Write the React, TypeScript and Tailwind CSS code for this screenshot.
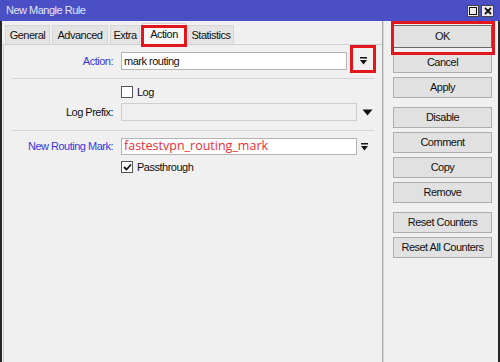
import React from "react";

const RedBox = ({ cls }: { cls: string }) => (
  <div className={`pointer-events-none absolute border-[3px] border-[#e3161e] ${cls}`} />
);

const BarArrow = () => (
  <svg width="9" height="8" viewBox="0 0 9 8">
    <rect x="1" y="0" width="7" height="1.5" fill="#111" />
    <path d="M1 3 H8 L4.5 7.5 Z" fill="#111" />
  </svg>
);

const Tri = () => (
  <svg width="11" height="7" viewBox="0 0 11 7">
    <path d="M0.5 0.5 H10.5 L5.5 6.5 Z" fill="#111" />
  </svg>
);

const Btn = ({ label, cls = "", dark = false }: { label: string; cls?: string; dark?: boolean }) => (
  <div
    className={`flex h-[21px] w-[99px] items-center justify-center border bg-[#e1e1e1] text-[#111] ${
      dark ? "border-[#6a6a6a]" : "border-[#adadad]"
    } ${cls}`}
  >
    {label}
  </div>
);

export default function App() {
  const tabs = ["General", "Advanced", "Extra", "Action", "Statistics"];
  return (
    <div className="flex h-[362px] w-[500px] flex-col overflow-hidden bg-[#f0f0f0] font-['Liberation_Sans',Arial,sans-serif] text-[11px] tracking-[-0.5px] text-[#111]">
      {/* Title bar */}
      <div className="flex h-[21px] shrink-0 items-center bg-[#4b4fc6] pl-[6px] pr-[6px]">
        <span className="text-[#e4e4f8]">New Mangle Rule</span>
        <div className="ml-auto flex gap-[2px]">
          <div className="flex h-[12px] w-[12px] items-center justify-center border border-[#444] bg-[#ececec]">
            <div className="h-[8px] w-[8px] border border-[#111]" />
          </div>
          <div className="flex h-[12px] w-[13px] items-center justify-center border border-[#444] bg-[#ececec]">
            <svg width="8" height="8" viewBox="0 0 8 8">
              <path d="M1 1 L7 7 M7 1 L1 7" stroke="#111" strokeWidth="1.8" />
            </svg>
          </div>
        </div>
      </div>

      {/* Body */}
      <div className="flex flex-1 border-x-2 border-[#262626]">
        {/* Left: tabs + panel */}
        <div className="flex w-[380px] flex-col">
          <div className="flex h-[23px] items-end gap-[2px] pl-[3px]">
            {tabs.map((t) =>
              t === "Action" ? (
                <div
                  key={t}
                  className="relative -mb-px flex h-[22px] w-[44px] items-center justify-center border border-b-0 border-[#d0d0d0] bg-[#f7f7f7]"
                >
                  {t}
                  <RedBox cls="left-[-2px] right-[-2px] top-[1px] bottom-[-2px]" />
                </div>
              ) : (
                <div
                  key={t}
                  className={`flex h-[19px] items-center justify-center border border-b-0 border-[#d6d6d6] bg-[#e4e4e4] ${
                    t === "General" ? "w-[45px]" : t === "Advanced" ? "w-[56px]" : t === "Extra" ? "w-[30px]" : "w-[46px]"
                  }`}
                >
                  {t}
                </div>
              )
            )}
          </div>

          <div className="ml-[1px] flex flex-1 flex-col border-l border-t border-[#d0d0d0] bg-[#f0f0f0]">
            {/* Action row */}
            <div className="mt-[7px] flex h-[18px] items-center">
              <div className="mr-[8px] w-[109px] text-right text-[#3737e0]">Action:</div>
              <div className="flex h-[18px] w-[226px] items-center border border-[#b4b4b4] bg-white pl-[2px]">mark routing</div>
              <div className="relative ml-[4px] flex h-[18px] w-[24px] items-center justify-center">
                <BarArrow />
                <RedBox cls="left-[-1px] right-[-1px] top-[-7px] bottom-[-3px]" />
              </div>
            </div>

            <div className="ml-[8px] mt-[8px] h-px w-[362px] bg-[#d4d4d4]" />

            {/* Log */}
            <div className="mt-[7px] flex h-[12px] items-center pl-[117px]">
              <div className="h-[12px] w-[12px] border border-[#555] bg-white" />
              <span className="ml-[4px]">Log</span>
            </div>

            {/* Log Prefix */}
            <div className="mt-[5px] flex h-[18px] items-center">
              <div className="mr-[8px] w-[109px] text-right">Log Prefix:</div>
              <div className="h-[18px] w-[236px] border border-[#cdcdcd] bg-[#efefef]" />
              <div className="flex h-[18px] w-[20px] items-center justify-center">
                <Tri />
              </div>
            </div>

            <div className="ml-[8px] mt-[9px] h-px w-[362px] bg-[#d4d4d4]" />

            {/* New Routing Mark */}
            <div className="mt-[7px] flex h-[17px] items-center">
              <div className="mr-[8px] w-[109px] text-right text-[#3737e0]">New Routing Mark:</div>
              <div className="flex h-[17px] w-[236px] items-center border border-[#b4b4b4] bg-white pl-[2px] font-['Open_Sans',Arial,sans-serif] text-[12.5px] tracking-normal text-[#ec2d35]">
                fastestvpn_routing_mark
              </div>
              <div className="flex h-[17px] w-[14px] items-center justify-center">
                <BarArrow />
              </div>
            </div>

            {/* Passthrough */}
            <div className="mt-[6px] flex h-[12px] items-center pl-[117px]">
              <div className="flex h-[12px] w-[12px] items-center justify-center border border-[#555] bg-white">
                <svg width="9" height="8" viewBox="0 0 9 8">
                  <path d="M1 4 L3.5 6.5 L8 1.5" stroke="#111" strokeWidth="1.8" fill="none" />
                </svg>
              </div>
              <span className="ml-[4px]">Passthrough</span>
            </div>
          </div>
        </div>

        {/* Separator */}
        <div className="w-[2px] border-l border-r border-l-[#a8a8a8] border-r-[#d8d8d8]" />

        {/* Right buttons */}
        <div className="flex flex-1 flex-col gap-[4px] pl-[9px] pt-[4px]">
          <div className="relative w-[99px]">
            <div className="flex h-[23px] w-[99px] items-center justify-center border border-[#6a6a6a] bg-[#e1e1e1]">OK</div>
            <RedBox cls="left-[-2px] right-[-3px] top-[-4px] bottom-[-7px]" />
          </div>
          <Btn label="Cancel" />
          <Btn label="Apply" />
          <Btn label="Disable" cls="mt-[5px]" />
          <Btn label="Comment" />
          <Btn label="Copy" />
          <Btn label="Remove" />
          <Btn label="Reset Counters" cls="mt-[5px]" />
          <Btn label="Reset All Counters" />
        </div>
      </div>
    </div>
  );
}
